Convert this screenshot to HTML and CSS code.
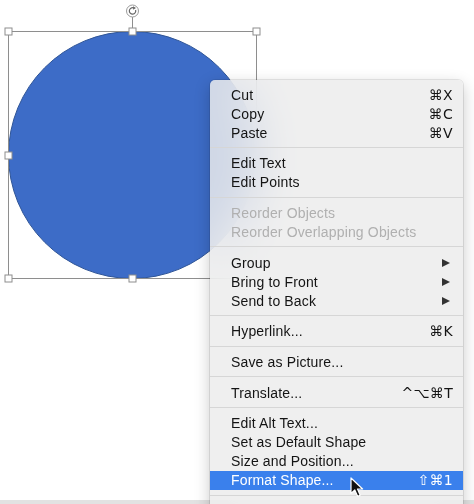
FILE: index.html
```html
<!doctype html>
<html lang="en">
<head>
<title>Format Shape</title>
<link rel="stylesheet" href="styles.css">
</head>
<body>
<div class="stage">
  <svg class="shape" width="270" height="290" viewBox="0 0 270 290">
    <circle cx="132" cy="155" r="123.5" fill="#3d6cc7" stroke="#2f5597" stroke-width="1"/>
    <rect x="8.5" y="31.5" width="248" height="247" fill="none" stroke="#8e8e8e"/>
    <line x1="132.5" y1="17" x2="132.5" y2="28" stroke="#8e8e8e"/>
    <circle cx="132.5" cy="11" r="6" fill="#fff" stroke="#9a9a9a"/>
    <path d="M135.6 10 A3.2 3.2 0 1 1 133.6 7.9" fill="none" stroke="#666" stroke-width="1.2"/>
    <path d="M133 6.2 L136 8 L133.2 9.8 Z" fill="#666"/>
    <g fill="#fff" stroke="#8e8e8e">
      <rect x="5" y="28" width="7" height="7"/>
      <rect x="129" y="28" width="7" height="7"/>
      <rect x="253" y="28" width="7" height="7"/>
      <rect x="5" y="152" width="7" height="7"/>
      <rect x="253" y="152" width="7" height="7"/>
      <rect x="5" y="275" width="7" height="7"/>
      <rect x="129" y="275" width="7" height="7"/>
      <rect x="253" y="275" width="7" height="7"/>
    </g>
  </svg>

  <div class="menu">
    <div class="item"><span>Cut</span><span class="key">⌘X</span></div>
    <div class="item"><span>Copy</span><span class="key">⌘C</span></div>
    <div class="item"><span>Paste</span><span class="key">⌘V</span></div>
    <div class="sep"></div>
    <div class="item"><span>Edit Text</span></div>
    <div class="item"><span>Edit Points</span></div>
    <div class="sep"></div>
    <div class="item off"><span>Reorder Objects</span></div>
    <div class="item off"><span>Reorder Overlapping Objects</span></div>
    <div class="sep"></div>
    <div class="item"><span>Group</span><span class="sub"></span></div>
    <div class="item"><span>Bring to Front</span><span class="sub"></span></div>
    <div class="item"><span>Send to Back</span><span class="sub"></span></div>
    <div class="sep"></div>
    <div class="item"><span>Hyperlink...</span><span class="key">⌘K</span></div>
    <div class="sep"></div>
    <div class="item"><span>Save as Picture...</span></div>
    <div class="sep"></div>
    <div class="item"><span>Translate...</span><span class="key">^⌥⌘T</span></div>
    <div class="sep"></div>
    <div class="item"><span>Edit Alt Text...</span></div>
    <div class="item"><span>Set as Default Shape</span></div>
    <div class="item"><span>Size and Position...</span></div>
    <div class="item active"><span>Format Shape...</span><span class="key">⇧⌘1</span></div>
    <div class="sep"></div>
    <div class="item"></div>
  </div>

  <svg class="cursor" width="15" height="21" viewBox="0 0 15 21">
    <path d="M1 1 L1 16.5 L4.8 13 L7.6 19.3 L10.2 18.2 L7.5 12 L12.6 12 Z" fill="#111" stroke="#fff" stroke-width="1.2" stroke-linejoin="round"/>
  </svg>
</div>
<div class="slide-edge"></div>
</body>
</html>
```

FILE: styles.css
```css
html, body {
  margin: 0;
  background: #fff;
  overflow: hidden;
}
body {
  width: 474px;
  height: 504px;
  font-family: "Liberation Sans", Arial, sans-serif;
}
.stage {
  position: relative;
  height: 500px;
}
.slide-edge {
  height: 4px;
  background: #e2e2e2;
}
.shape {
  position: absolute;
  left: 0;
  top: 0;
}
.menu {
  position: absolute;
  left: 210px;
  top: 80px;
  width: 253px;
  padding: 5px 0 0;
  background: rgba(236, 236, 236, 0.84);
  backdrop-filter: blur(24px);
  border-radius: 5px;
  box-shadow: 0 0 0 1px rgba(0, 0, 0, 0.09), 0 5px 16px rgba(0, 0, 0, 0.22);
  font-size: 14px;
  letter-spacing: 0.15px;
  color: #141414;
  z-index: 1;
}
.item {
  height: 19px;
  display: flex;
  align-items: center;
  justify-content: space-between;
  padding: 0 10px 0 21px;
  white-space: nowrap;
}
.item.off { color: #b0b0b0; }
.item.active {
  background: #3a80ec;
  color: #fff;
}
.key {
  font-family: "DejaVu Sans", "Liberation Sans", sans-serif;
  font-size: 14px;
  letter-spacing: 0.3px;
}
.sub {
  width: 0;
  height: 0;
  margin-right: 3px;
  border-left: 8px solid #333;
  border-top: 4.5px solid transparent;
  border-bottom: 4.5px solid transparent;
}
.sep {
  height: 1px;
  margin: 5px 0 5.7px;
  background: #d6d6d6;
}
.cursor {
  position: absolute;
  left: 350px;
  top: 477px;
  z-index: 2;
}
```
